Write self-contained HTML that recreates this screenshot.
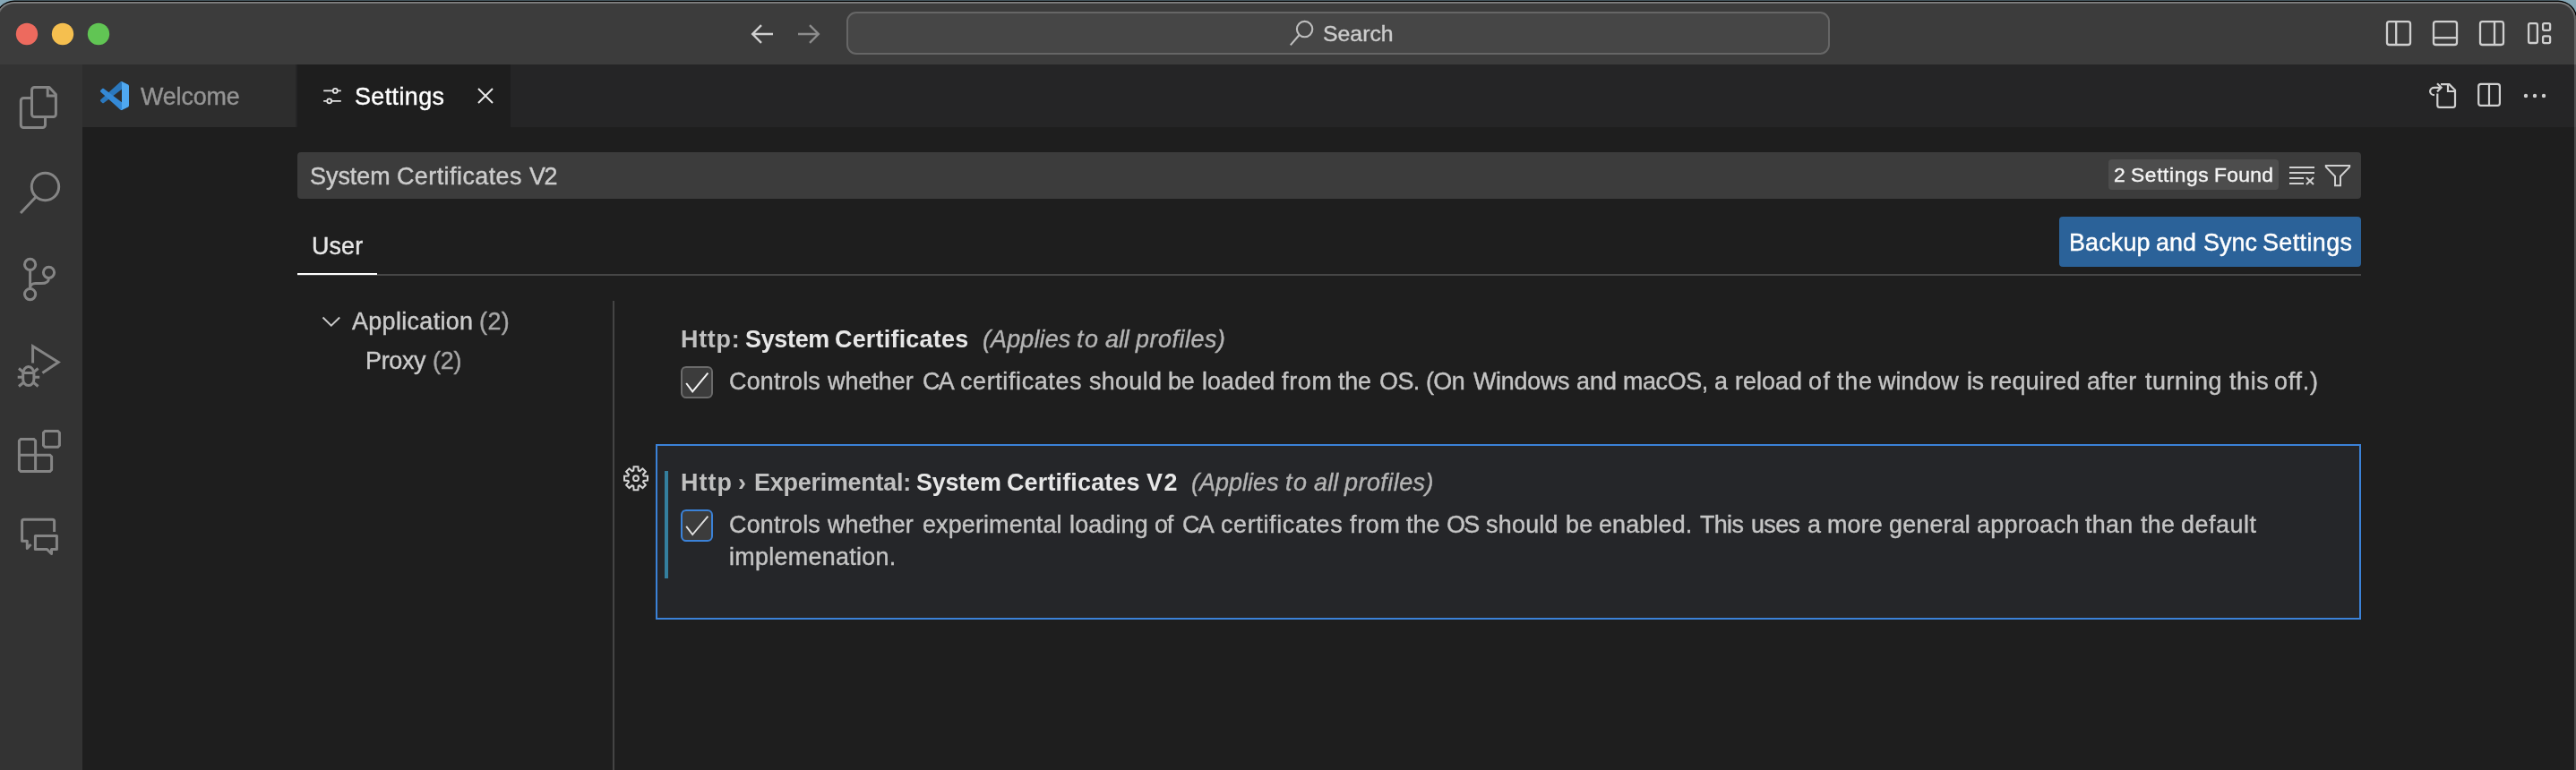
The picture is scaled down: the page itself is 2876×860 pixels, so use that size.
<!DOCTYPE html>
<html lang="en">
<head>
<meta charset="utf-8">
<title>Settings</title>
<style>
html,body{margin:0;padding:0;}
body{width:2876px;height:860px;overflow:hidden;background:#86a8b7;position:relative;
  font-family:"Liberation Sans",sans-serif;color:#cccccc;}
.abs{position:absolute;}
#win{position:absolute;left:-4.5px;top:2px;width:2880.5px;height:900px;border-radius:20px;
  background:#1e1e1e;overflow:hidden;box-shadow:0 0 0 1.5px #000;}
#inner{position:absolute;left:4.5px;top:-2px;width:2876px;height:860px;}
#titlebar{left:0;top:0;width:2876px;height:72px;background:#3c3c3c;}
#activity{left:0;top:72px;width:92px;height:788px;background:#333333;}
#tabbar{left:92px;top:72px;width:2784px;height:70px;background:#252526;}
#tab1{left:92px;top:72px;width:238px;height:70px;background:#2d2d2d;}
#tab2{left:332px;top:72px;width:238px;height:70px;background:#1e1e1e;}
#cc{left:945px;top:13px;width:1094px;height:44px;border:2px solid #666666;border-radius:11px;background:#464646;}
.t{position:absolute;white-space:nowrap;line-height:1;will-change:transform;}
#hl{position:absolute;left:-4.5px;top:2px;width:2880.5px;height:900px;border-radius:20px;pointer-events:none;
  box-shadow:inset 0 0 0 2px rgba(255,255,255,0.2), inset 0 1.5px 0 0 rgba(255,255,255,0.2);}
#sinput{left:332px;top:170px;width:2304px;height:52px;border-radius:4px;background:#3c3c3c;}
#badge{left:2354px;top:178px;width:190px;height:34px;border-radius:4px;background:#4d4d4d;}
#syncbtn{left:2299px;top:242px;width:337px;height:56px;border-radius:4px;background:#2b6299;}
#hline{left:332px;top:306px;width:2304px;height:1.5px;background:#464646;}
#uline{left:332px;top:305px;width:89px;height:2px;background:#ffffff;}
#split{left:684px;top:336px;width:2px;height:524px;background:#444444;}
#focus{left:732px;top:496px;width:1900px;height:192px;border:2px solid #3b82d8;background:#252629;}
#modbar{left:742px;top:526px;width:4px;height:120px;background:#347f9e;}
.cb{width:32px;height:32px;border:2px solid #6b6b6b;border-radius:6px;background:#3c3c3c;}
#cb1{left:760px;top:409px;}
#cb2{left:760px;top:569px;border-color:#3b82d8;}
</style>
</head>
<body>
<div id="win"><div id="inner">
  <div class="abs" id="titlebar"></div>
  <div class="abs" id="activity"></div>
  <div class="abs" id="tabbar"></div>
  <div class="abs" id="tab1"></div>
  <div class="abs" id="tab2"></div>
  <div class="abs" id="cc"></div>

  <div class="abs" id="sinput"></div>
  <div class="abs" id="badge"></div>
  <div class="abs" id="syncbtn"></div>
  <div class="abs" id="hline"></div>
  <div class="abs" id="uline"></div>
  <div class="abs" id="split"></div>
  <div class="abs" id="focus"></div>
  <div class="abs" id="modbar"></div>
  <div class="abs cb" id="cb1"></div>
  <div class="abs cb" id="cb2"></div>

  <span class="t" id="t_search" style="left:1477.00px;top:26px;font-size:24.8px;letter-spacing:0.010px;color:#cccccc;-webkit-text-stroke:0.4px currentColor;">Search</span> 
  <span class="t" id="t_welcome" style="left:157.00px;top:95px;font-size:26.9px;letter-spacing:-0.140px;color:#949494;-webkit-text-stroke:0.4px currentColor;">Welcome</span> 
  <span class="t" id="t_settings" style="left:396.00px;top:95px;font-size:26.9px;letter-spacing:0.396px;color:#ffffff;-webkit-text-stroke:0.4px currentColor;">Settings</span> 
  <span class="t" id="q_0" style="left:346.00px;top:184px;font-size:26.9px;letter-spacing:0.010px;color:#cccccc;-webkit-text-stroke:0.4px currentColor;">System</span> 
  <span class="t" id="q_1" style="left:443.00px;top:184px;font-size:26.9px;letter-spacing:0.452px;color:#cccccc;-webkit-text-stroke:0.4px currentColor;">Certificates</span> 
  <span class="t" id="q_2" style="left:591.00px;top:184px;font-size:26.9px;letter-spacing:-1.430px;color:#cccccc;-webkit-text-stroke:0.4px currentColor;">V2</span> 
  <span class="t" id="f_0" style="left:2359.50px;top:184px;font-size:22.8px;letter-spacing:0.550px;color:#f4f4f4;-webkit-text-stroke:0.4px currentColor;">2</span> 
  <span class="t" id="f_1" style="left:2379.00px;top:184px;font-size:22.8px;letter-spacing:0.627px;color:#f4f4f4;-webkit-text-stroke:0.4px currentColor;">Settings</span> 
  <span class="t" id="f_2" style="left:2472.00px;top:184px;font-size:22.8px;letter-spacing:0.325px;color:#f4f4f4;-webkit-text-stroke:0.4px currentColor;">Found</span> 
  <span class="t" id="t_user" style="left:347.50px;top:262px;font-size:26.9px;letter-spacing:0.130px;color:#e7e7e7;-webkit-text-stroke:0.4px currentColor;">User</span> 
  <span class="t" id="b_0" style="left:2309.50px;top:258px;font-size:26.9px;letter-spacing:0.154px;color:#ffffff;-webkit-text-stroke:0.4px currentColor;">Backup</span> 
  <span class="t" id="b_1" style="left:2407.00px;top:258px;font-size:26.9px;letter-spacing:0.010px;color:#ffffff;-webkit-text-stroke:0.4px currentColor;">and</span> 
  <span class="t" id="b_2" style="left:2459.50px;top:258px;font-size:26.9px;letter-spacing:0.070px;color:#ffffff;-webkit-text-stroke:0.4px currentColor;">Sync</span> 
  <span class="t" id="b_3" style="left:2525.50px;top:258px;font-size:26.9px;letter-spacing:0.396px;color:#ffffff;-webkit-text-stroke:0.4px currentColor;">Settings</span> 
  <span class="t" id="t_app" style="left:392.50px;top:346px;font-size:26.9px;letter-spacing:0.352px;color:#cccccc;-webkit-text-stroke:0.4px currentColor;">Application</span> 
  <span class="t" id="t_app2" style="left:535.00px;top:346px;font-size:26.9px;letter-spacing:0.460px;color:#a6a6a6;-webkit-text-stroke:0.4px currentColor;">(2)</span> 
  <span class="t" id="t_proxy" style="left:408.00px;top:390px;font-size:26.9px;letter-spacing:-0.305px;color:#cccccc;-webkit-text-stroke:0.4px currentColor;">Proxy</span> 
  <span class="t" id="t_proxy2" style="left:483.00px;top:390px;font-size:26.9px;letter-spacing:-0.170px;color:#a6a6a6;-webkit-text-stroke:0.4px currentColor;">(2)</span> 
  <span class="t" id="t1_0" style="left:760.00px;top:366px;font-size:26.9px;letter-spacing:0.730px;color:#c0c0c0;font-weight:bold;">Http:</span> 
  <span class="t" id="t1_1" style="left:831.50px;top:366px;font-size:26.9px;letter-spacing:-0.278px;color:#e7e7e7;font-weight:bold;">System</span> 
  <span class="t" id="t1_2" style="left:932.00px;top:366px;font-size:26.9px;letter-spacing:0.239px;color:#e7e7e7;font-weight:bold;">Certificates</span> 
  <span class="t" id="s1_0" style="left:1096.50px;top:366px;font-size:26.9px;letter-spacing:0.164px;font-style:italic;color:#b4b4b4;-webkit-text-stroke:0.4px currentColor;">(Applies</span> 
  <span class="t" id="s1_1" style="left:1202.00px;top:366px;font-size:26.9px;letter-spacing:1.600px;font-style:italic;color:#b4b4b4;-webkit-text-stroke:0.4px currentColor;">to</span> 
  <span class="t" id="s1_2" style="left:1234.00px;top:366px;font-size:26.9px;letter-spacing:-0.080px;font-style:italic;color:#b4b4b4;-webkit-text-stroke:0.4px currentColor;">all</span> 
  <span class="t" id="s1_3" style="left:1268.00px;top:366px;font-size:26.9px;letter-spacing:0.550px;font-style:italic;color:#b4b4b4;-webkit-text-stroke:0.4px currentColor;">profiles)</span> 
  <span class="t" id="d1_0" style="left:813.50px;top:413px;font-size:26.9px;letter-spacing:0.241px;color:#c4c4c4;-webkit-text-stroke:0.4px currentColor;">Controls</span> 
  <span class="t" id="d1_1" style="left:924.00px;top:413px;font-size:26.9px;letter-spacing:0.010px;color:#c4c4c4;-webkit-text-stroke:0.4px currentColor;">whether</span> 
  <span class="t" id="d1_2" style="left:1029.50px;top:413px;font-size:26.9px;letter-spacing:-1.600px;color:#c4c4c4;-webkit-text-stroke:0.4px currentColor;">CA</span> 
  <span class="t" id="d1_3" style="left:1071.50px;top:413px;font-size:26.9px;letter-spacing:0.632px;color:#c4c4c4;-webkit-text-stroke:0.4px currentColor;">certificates</span> 
  <span class="t" id="d1_4" style="left:1215.50px;top:413px;font-size:26.9px;letter-spacing:0.334px;color:#c4c4c4;-webkit-text-stroke:0.4px currentColor;">should</span> 
  <span class="t" id="d1_5" style="left:1304.00px;top:413px;font-size:26.9px;letter-spacing:-0.170px;color:#c4c4c4;-webkit-text-stroke:0.4px currentColor;">be</span> 
  <span class="t" id="d1_6" style="left:1341.50px;top:413px;font-size:26.9px;letter-spacing:0.082px;color:#c4c4c4;-webkit-text-stroke:0.4px currentColor;">loaded</span> 
  <span class="t" id="d1_7" style="left:1431.00px;top:413px;font-size:26.9px;letter-spacing:0.670px;color:#c4c4c4;-webkit-text-stroke:0.4px currentColor;">from</span> 
  <span class="t" id="d1_8" style="left:1494.00px;top:413px;font-size:26.9px;letter-spacing:-0.260px;color:#c4c4c4;-webkit-text-stroke:0.4px currentColor;">the</span> 
  <span class="t" id="d1_9" style="left:1539.50px;top:413px;font-size:26.9px;letter-spacing:-0.530px;color:#c4c4c4;-webkit-text-stroke:0.4px currentColor;">OS.</span> 
  <span class="t" id="d1_10" style="left:1592.00px;top:413px;font-size:26.9px;letter-spacing:-0.620px;color:#c4c4c4;-webkit-text-stroke:0.4px currentColor;">(On</span> 
  <span class="t" id="d1_11" style="left:1645.00px;top:413px;font-size:26.9px;letter-spacing:-0.260px;color:#c4c4c4;-webkit-text-stroke:0.4px currentColor;">Windows</span> 
  <span class="t" id="d1_12" style="left:1760.00px;top:413px;font-size:26.9px;letter-spacing:0.010px;color:#c4c4c4;-webkit-text-stroke:0.4px currentColor;">and</span> 
  <span class="t" id="d1_13" style="left:1812.00px;top:413px;font-size:26.9px;letter-spacing:-0.386px;color:#c4c4c4;-webkit-text-stroke:0.4px currentColor;">macOS,</span> 
  <span class="t" id="d1_14" style="left:1914.00px;top:413px;font-size:26.9px;letter-spacing:0.550px;color:#c4c4c4;-webkit-text-stroke:0.4px currentColor;">a</span> 
  <span class="t" id="d1_15" style="left:1936.50px;top:413px;font-size:26.9px;letter-spacing:0.046px;color:#c4c4c4;-webkit-text-stroke:0.4px currentColor;">reload</span> 
  <span class="t" id="d1_16" style="left:2018.50px;top:413px;font-size:26.9px;letter-spacing:1.600px;color:#c4c4c4;-webkit-text-stroke:0.4px currentColor;">of</span> 
  <span class="t" id="d1_17" style="left:2051.00px;top:413px;font-size:26.9px;letter-spacing:0.730px;color:#c4c4c4;-webkit-text-stroke:0.4px currentColor;">the</span> 
  <span class="t" id="d1_18" style="left:2097.00px;top:413px;font-size:26.9px;letter-spacing:-0.026px;color:#c4c4c4;-webkit-text-stroke:0.4px currentColor;">window</span> 
  <span class="t" id="d1_19" style="left:2195.50px;top:413px;font-size:26.9px;letter-spacing:-0.350px;color:#c4c4c4;-webkit-text-stroke:0.4px currentColor;">is</span> 
  <span class="t" id="d1_20" style="left:2222.00px;top:413px;font-size:26.9px;letter-spacing:0.241px;color:#c4c4c4;-webkit-text-stroke:0.4px currentColor;">required</span> 
  <span class="t" id="d1_21" style="left:2330.00px;top:413px;font-size:26.9px;letter-spacing:0.370px;color:#c4c4c4;-webkit-text-stroke:0.4px currentColor;">after</span> 
  <span class="t" id="d1_22" style="left:2395.00px;top:413px;font-size:26.9px;letter-spacing:0.550px;color:#c4c4c4;-webkit-text-stroke:0.4px currentColor;">turning</span> 
  <span class="t" id="d1_23" style="left:2488.50px;top:413px;font-size:26.9px;letter-spacing:0.610px;color:#c4c4c4;-webkit-text-stroke:0.4px currentColor;">this</span> 
  <span class="t" id="d1_24" style="left:2539.00px;top:413px;font-size:26.9px;letter-spacing:0.775px;color:#c4c4c4;-webkit-text-stroke:0.4px currentColor;">off.)</span> 
  <span class="t" id="t2_0" style="left:760.00px;top:526px;font-size:26.9px;letter-spacing:1.090px;color:#c0c0c0;font-weight:bold;">Http</span> 
  <span class="t" id="t2_1" style="left:824.00px;top:526px;font-size:26.9px;letter-spacing:0.550px;color:#c0c0c0;font-weight:bold;">›</span> 
  <span class="t" id="t2_2" style="left:842.00px;top:526px;font-size:26.9px;letter-spacing:-0.215px;color:#c0c0c0;font-weight:bold;">Experimental:</span> 
  <span class="t" id="t2_3" style="left:1022.50px;top:526px;font-size:26.9px;letter-spacing:-0.170px;color:#e7e7e7;font-weight:bold;">System</span> 
  <span class="t" id="t2_4" style="left:1124.00px;top:526px;font-size:26.9px;letter-spacing:0.190px;color:#e7e7e7;font-weight:bold;">Certificates</span> 
  <span class="t" id="t2_5" style="left:1279.50px;top:526px;font-size:26.9px;letter-spacing:1.600px;color:#e7e7e7;font-weight:bold;">V2</span> 
  <span class="t" id="s2_0" style="left:1329.50px;top:526px;font-size:26.9px;letter-spacing:0.061px;font-style:italic;color:#b4b4b4;-webkit-text-stroke:0.4px currentColor;">(Applies</span> 
  <span class="t" id="s2_1" style="left:1435.00px;top:526px;font-size:26.9px;letter-spacing:1.600px;font-style:italic;color:#b4b4b4;-webkit-text-stroke:0.4px currentColor;">to</span> 
  <span class="t" id="s2_2" style="left:1466.50px;top:526px;font-size:26.9px;letter-spacing:0.190px;font-style:italic;color:#b4b4b4;-webkit-text-stroke:0.4px currentColor;">all</span> 
  <span class="t" id="s2_3" style="left:1501.00px;top:526px;font-size:26.9px;letter-spacing:0.483px;font-style:italic;color:#b4b4b4;-webkit-text-stroke:0.4px currentColor;">profiles)</span> 
  <span class="t" id="d2_0" style="left:813.50px;top:573px;font-size:26.9px;letter-spacing:0.241px;color:#c4c4c4;-webkit-text-stroke:0.4px currentColor;">Controls</span> 
  <span class="t" id="d2_1" style="left:924.00px;top:573px;font-size:26.9px;letter-spacing:0.010px;color:#c4c4c4;-webkit-text-stroke:0.4px currentColor;">whether</span> 
  <span class="t" id="d2_2" style="left:1029.50px;top:573px;font-size:26.9px;letter-spacing:0.141px;color:#c4c4c4;-webkit-text-stroke:0.4px currentColor;">experimental</span> 
  <span class="t" id="d2_3" style="left:1193.50px;top:573px;font-size:26.9px;letter-spacing:0.160px;color:#c4c4c4;-webkit-text-stroke:0.4px currentColor;">loading</span> 
  <span class="t" id="d2_4" style="left:1288.50px;top:573px;font-size:26.9px;letter-spacing:-1.150px;color:#c4c4c4;-webkit-text-stroke:0.4px currentColor;">of</span> 
  <span class="t" id="d2_5" style="left:1320.00px;top:573px;font-size:26.9px;letter-spacing:-1.600px;color:#c4c4c4;-webkit-text-stroke:0.4px currentColor;">CA</span> 
  <span class="t" id="d2_6" style="left:1363.00px;top:573px;font-size:26.9px;letter-spacing:0.648px;color:#c4c4c4;-webkit-text-stroke:0.4px currentColor;">certificates</span> 
  <span class="t" id="d2_7" style="left:1506.50px;top:573px;font-size:26.9px;letter-spacing:0.670px;color:#c4c4c4;-webkit-text-stroke:0.4px currentColor;">from</span> 
  <span class="t" id="d2_8" style="left:1569.50px;top:573px;font-size:26.9px;letter-spacing:0.010px;color:#c4c4c4;-webkit-text-stroke:0.4px currentColor;">the</span> 
  <span class="t" id="d2_9" style="left:1615.00px;top:573px;font-size:26.9px;letter-spacing:-1.600px;color:#c4c4c4;-webkit-text-stroke:0.4px currentColor;">OS</span> 
  <span class="t" id="d2_10" style="left:1658.50px;top:573px;font-size:26.9px;letter-spacing:0.262px;color:#c4c4c4;-webkit-text-stroke:0.4px currentColor;">should</span> 
  <span class="t" id="d2_11" style="left:1748.00px;top:573px;font-size:26.9px;letter-spacing:0.190px;color:#c4c4c4;-webkit-text-stroke:0.4px currentColor;">be</span> 
  <span class="t" id="d2_12" style="left:1785.00px;top:573px;font-size:26.9px;letter-spacing:0.164px;color:#c4c4c4;-webkit-text-stroke:0.4px currentColor;">enabled.</span> 
  <span class="t" id="d2_13" style="left:1897.50px;top:573px;font-size:26.9px;letter-spacing:-0.650px;color:#c4c4c4;-webkit-text-stroke:0.4px currentColor;">This</span> 
  <span class="t" id="d2_14" style="left:1954.50px;top:573px;font-size:26.9px;letter-spacing:-0.590px;color:#c4c4c4;-webkit-text-stroke:0.4px currentColor;">uses</span> 
  <span class="t" id="d2_15" style="left:2018.00px;top:573px;font-size:26.9px;letter-spacing:0.550px;color:#c4c4c4;-webkit-text-stroke:0.4px currentColor;">a</span> 
  <span class="t" id="d2_16" style="left:2040.00px;top:573px;font-size:26.9px;letter-spacing:0.130px;color:#c4c4c4;-webkit-text-stroke:0.4px currentColor;">more</span> 
  <span class="t" id="d2_17" style="left:2108.50px;top:573px;font-size:26.9px;letter-spacing:0.190px;color:#c4c4c4;-webkit-text-stroke:0.4px currentColor;">general</span> 
  <span class="t" id="d2_18" style="left:2206.50px;top:573px;font-size:26.9px;letter-spacing:0.319px;color:#c4c4c4;-webkit-text-stroke:0.4px currentColor;">approach</span> 
  <span class="t" id="d2_19" style="left:2328.00px;top:573px;font-size:26.9px;letter-spacing:0.250px;color:#c4c4c4;-webkit-text-stroke:0.4px currentColor;">than</span> 
  <span class="t" id="d2_20" style="left:2389.50px;top:573px;font-size:26.9px;letter-spacing:0.280px;color:#c4c4c4;-webkit-text-stroke:0.4px currentColor;">the</span> 
  <span class="t" id="d2_21" style="left:2434.50px;top:573px;font-size:26.9px;letter-spacing:0.520px;color:#c4c4c4;-webkit-text-stroke:0.4px currentColor;">default</span> 
  <span class="t" id="d3_0" style="left:813.50px;top:609px;font-size:26.9px;letter-spacing:0.301px;color:#c4c4c4;-webkit-text-stroke:0.4px currentColor;">implemenation.</span> 
  <svg class="abs" style="left:0;top:0" width="2876" height="860" viewBox="0 0 2876 860" fill="none" stroke-linecap="butt" stroke-linejoin="miter">
    <!-- traffic lights -->
    <circle cx="30" cy="38" r="12.2" fill="#ed6a5e"/>
    <circle cx="70" cy="38" r="12.2" fill="#f5bf4f"/>
    <circle cx="110" cy="38" r="12.2" fill="#61c554"/>
    <!-- nav arrows -->
    <g stroke="#d0d0d0" stroke-width="2.4">
      <path d="M863 38H841M850 28.200L840.200 38l9.800 9.800"/>
    </g>
    <g stroke="#8c8c8c" stroke-width="2.4">
      <path d="M891 38H913M904 28.200L913.800 38l-9.800 9.800"/>
    </g>
    <!-- command center search icon -->
    <g stroke="#bebebe" stroke-width="2.100">
      <circle cx="1456.600" cy="32.600" r="8.700"/>
      <path d="M1450.400 39.200L1440.800 50.400"/>
    </g>
    <!-- layout icons -->
    <g stroke="#cfcfcf" stroke-width="2.3">
      <rect x="2665" y="24.100" width="26" height="25.900" rx="2.600"/>
      <path d="M2675.200 24v26"/>
      <rect x="2717" y="24.100" width="26" height="25.900" rx="2.600"/>
      <path d="M2717 42.200h26"/>
      <rect x="2769" y="24.100" width="26" height="25.900" rx="2.600"/>
      <path d="M2785 24v26"/>
      <rect x="2823.100" y="26.100" width="9.800" height="21.900" rx="1.800"/>
      <rect x="2839.100" y="26.100" width="8" height="7.700" rx="1.500"/>
      <rect x="2839.100" y="40.400" width="8" height="7.700" rx="1.500"/>
    </g>
    <!-- vscode logo -->
    <g transform="translate(112 91) scale(0.32)" stroke="none">
      <path fill="#2b78bd" d="M96.4614 10.7962L75.8569 0.875542C73.4719 -0.272773 70.6217 0.211611 68.75 2.08333L1.29858 63.5832C-0.515693 65.2373 -0.513607 68.0937 1.30308 69.7452L6.81272 74.7538C8.29793 76.1039 10.5347 76.2033 12.1338 74.9905L93.3609 13.3699C96.086 11.3026 100 13.2462 100 16.6667V16.4275C100 14.0265 98.6246 11.8378 96.4614 10.7962Z"/>
      <path fill="#3489d6" d="M96.4614 89.2038L75.8569 99.1245C73.4719 100.273 70.6217 99.7884 68.75 97.9167L1.29858 36.4169C-0.515693 34.7627 -0.513607 31.9063 1.30308 30.2548L6.81272 25.2462C8.29793 23.8961 10.5347 23.7967 12.1338 25.0095L93.3609 86.6301C96.086 88.6974 100 86.7538 100 83.3334V83.5726C100 85.9735 98.6246 88.1622 96.4614 89.2038Z"/>
      <path fill="#4fa8f0" d="M75.8578 99.1263C73.4721 100.274 70.6219 99.7885 68.75 97.9166C71.0564 100.223 75 98.5895 75 95.3278V4.67213C75 1.41039 71.0564 -0.223106 68.75 2.08329C70.6219 0.211402 73.4721 -0.273666 75.8578 0.873633L96.4587 10.7807C98.6234 11.8217 100 14.0112 100 16.4132V83.5871C100 85.9891 98.6234 88.1786 96.4586 89.2196L75.8578 99.1263Z"/>
    </g>
    <!-- settings tab icon -->
    <g stroke="#e4e4e4" stroke-width="1.8">
      <path d="M361.2 101.4H371.400M377.200 101.4H380.800M361.2 112.8H364.800M370.600 112.8H380.800"/>
      <circle cx="374.300" cy="101.400" r="2.500"/>
      <circle cx="367.700" cy="112.800" r="2.500"/>
    </g>
    <!-- tab close -->
    <path stroke="#e8e8e8" stroke-width="2" d="M534 99L550 115M550 99L534 115"/>
    <!-- editor actions -->
    <g stroke="#d0d0d0" stroke-width="2.200">
      <path d="M2725 94.100H2734.500L2741 100.600V117.500A2.400 2.400 0 0 1 2738.600 119.900H2723.700A2.400 2.400 0 0 1 2721.300 117.500V104.500"/>
      <path d="M2733 94.100V102H2741"/>
      <path d="M2718 106.200A4.900 4.200 0 0 1 2718 97.800H2724.500"/>
      <path d="M2721 93.200L2725.600 97.800L2721 102.400"/>
      <rect x="2767.200" y="93.900" width="23.700" height="24" rx="2.600"/>
      <path d="M2779 94V118"/>
    </g>
    <g fill="#d0d0d0" stroke="none">
      <circle cx="2820" cy="107" r="2.200"/><circle cx="2830" cy="107" r="2.200"/><circle cx="2840" cy="107" r="2.200"/>
    </g>
    <!-- activity bar -->
    <g stroke="#858585" stroke-width="3" stroke-linejoin="round">
      <path d="M38.500 97.500H55L62.400 105.500V127.500a3 3 0 0 1 -3 3H38.500a3 3 0 0 1 -3 -3V100.500a3 3 0 0 1 3 -3Z"/>
      <path d="M53.200 97.500V107H62.400" stroke-linejoin="miter"/>
      <path d="M34 109.500H26.300a3 3 0 0 0 -3 3V139.500a3 3 0 0 0 3 3H47.500a3 3 0 0 0 3 -3V132"/>
      <!-- search -->
      <circle cx="50.500" cy="208.500" r="15.200"/>
      <path d="M39.800 220.200L23 238"/>
      <!-- scm -->
      <circle cx="33.600" cy="295.400" r="6.100"/>
      <circle cx="33.600" cy="328.600" r="6.100"/>
      <circle cx="54.500" cy="304.300" r="6.100"/>
      <path d="M33.600 301.500V322.500"/>
      <path d="M33.600 322C33.600 318.500 36 316.500 39.500 316.500H46C51 316.500 54.500 314.500 54.500 310.400"/>
      <!-- debug -->
      <path d="M36.600 405.500V386.800L65.200 404.600L47.400 416.600" stroke-linejoin="miter"/>
      <path d="M25.700 417.500a6.100 8 0 0 1 12.200 0V423.500a6.100 7 0 0 1 -12.200 0Z"/>
      <path d="M26 416.500H37.600M19.700 421.300H25.600M38 421.300H44.200M21 411.500L26.500 416M42.600 411.500L37.100 416M21 431.500L26.500 427M42.600 431.500L37.100 427"/>
      <!-- extensions -->
      <path d="M21.400 492.300L23.200 490.500H37.800L39.600 492.300V508.200H55.800L57.600 510V524.700L55.800 526.500H23.200L21.400 524.700Z" stroke-linejoin="miter"/>
      <path d="M21.400 508.200H39.600V526.500" stroke-linejoin="miter"/>
      <path d="M48.500 483.300L50.300 481.500H64.600L66.400 483.300V497.500L64.600 499.300H50.300L48.500 497.500Z" stroke-linejoin="miter"/>
      <!-- chat -->
      <path d="M60.600 593.900V582.300a2 2 0 0 0 -2 -2H26.600a2 2 0 0 0 -2 2V604.300H30.300V612.500L34.500 608"/>
      <path d="M39.400 598.500H63.400V613.500H57.500V618.500L52.500 613.500H39.400Z"/>
    </g>
    <!-- clear all + filter -->
    <g stroke="#d0d0d0" stroke-width="2">
      <path d="M2556 187H2584M2556 193H2584M2556 199H2572M2556 205H2572M2575 198.200L2583 206M2583 198.200L2575 206"/>
      <path d="M2596.800 185H2623.200V186.400L2613 197V207.200H2607V197L2596.800 186.400Z"/>
    </g>
    <!-- toc chevron -->
    <path stroke="#c8c8c8" stroke-width="2" d="M360.500 354.500L369.800 363.700L379.200 354.500"/>
    <!-- gear -->
    <g stroke="#d4d4d4" stroke-width="2" stroke-linejoin="miter">
      <path d="M707.29 525.62 L707.59 521.22 L712.41 521.22 L712.71 525.62 L714.16 526.22 L717.48 523.32 L720.88 526.72 L717.98 530.04 L718.58 531.49 L722.98 531.79 L722.98 536.61 L718.58 536.91 L717.98 538.36 L720.88 541.68 L717.48 545.08 L714.16 542.18 L712.71 542.78 L712.41 547.18 L707.59 547.18 L707.29 542.78 L705.84 542.18 L702.52 545.08 L699.12 541.68 L702.02 538.36 L701.42 536.91 L697.02 536.61 L697.02 531.79 L701.42 531.49 L702.02 530.04 L699.12 526.72 L702.52 523.32 L705.84 526.22Z"/>
      <circle cx="710" cy="534.200" r="2.900"/>
    </g>
    <!-- checkmarks -->
    <path stroke="#f4f4f4" stroke-width="2" d="M766.200 428L773.200 437.300L790.400 416.700"/>
    <path stroke="#e0e0e0" stroke-width="1.900" d="M766.200 587.800L773.200 597L790.400 576.700"/>
  </svg>
</div></div>
<div id="hl"></div>
</body>
</html>
